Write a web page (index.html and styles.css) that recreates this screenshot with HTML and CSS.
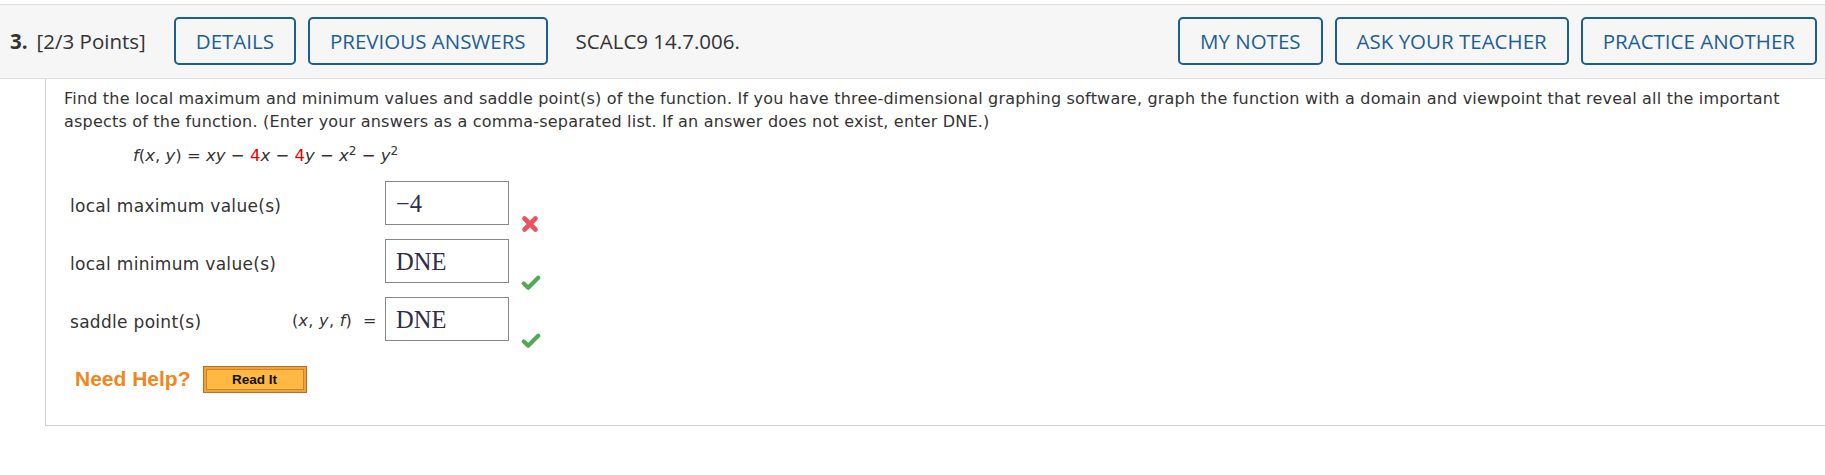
FILE: index.html
```html
<!DOCTYPE html>
<html>
<head>
<meta charset="utf-8">
<link rel="stylesheet" href="styles.css">
</head>
<body>
<div class="qhead">
  <div class="qnum"><b>3.</b><span class="pts">[2/3 Points]</span></div>
  <a class="btn">DETAILS</a>
  <a class="btn">PREVIOUS ANSWERS</a>
  <span class="code">SCALC9 14.7.006.</span>
  <span class="spacer"></span>
  <a class="btn">MY NOTES</a>
  <a class="btn">ASK YOUR TEACHER</a>
  <a class="btn">PRACTICE ANOTHER</a>
</div>
<div class="qbody">
  <p class="prompt">Find the local maximum and minimum values and saddle point(s) of the function. If you have three-dimensional graphing software, graph the function with a domain and viewpoint that reveal all the important aspects of the function. (Enter your answers as a comma-separated list. If an answer does not exist, enter DNE.)</p>
  <p class="func"><i>f</i>(<i>x</i>, <i>y</i>) = <i>xy</i> − <span class="red">4</span><i>x</i> − <span class="red">4</span><i>y</i> − <i>x</i><sup>2</sup> − <i>y</i><sup>2</sup></p>
  <div class="rows">
    <div class="row">
      <span class="label">local maximum value(s)</span>
      <span class="eq"></span>
      <span class="ans">−4</span>
      <svg class="mark" width="18" height="18" viewBox="0 0 18 18"><path d="M3.5 3.5 L14.5 14.5 M14.5 3.5 L3.5 14.5" stroke="#e8545c" stroke-width="4.6" stroke-linecap="round"/></svg>
    </div>
    <div class="row">
      <span class="label">local minimum value(s)</span>
      <span class="eq"></span>
      <span class="ans">DNE</span>
      <svg class="mark" width="20" height="16" viewBox="0 0 20 16"><path d="M2.8 8.5 L7.2 12.8 L17.2 2.8" fill="none" stroke="#55a855" stroke-width="4.2" stroke-linecap="round" stroke-linejoin="round"/></svg>
    </div>
    <div class="row">
      <span class="label">saddle point(s)</span>
      <span class="eq">(<i>x</i>, <i>y</i>, <i>f</i>) &nbsp;=</span>
      <span class="ans">DNE</span>
      <svg class="mark" width="20" height="16" viewBox="0 0 20 16"><path d="M2.8 8.5 L7.2 12.8 L17.2 2.8" fill="none" stroke="#55a855" stroke-width="4.2" stroke-linecap="round" stroke-linejoin="round"/></svg>
    </div>
  </div>
  <div class="help">
    <span class="need">Need Help?</span>
    <span class="readit"><span class="readit-in">Read It</span></span>
  </div>
</div>
</body>
</html>
```
FILE: styles.css
```css
html, body {
  margin: 0;
  padding: 0;
  background: #fff;
}
body {
  font-family: "DejaVu Sans", Verdana, sans-serif;
  color: #333;
}
.qhead {
  margin-top: 4px;
  border-top: 1px solid #dedede;
  border-bottom: 1px solid #dedede;
  background: #f6f6f6;
  display: flex;
  align-items: center;
  gap: 12px;
  padding: 12px 8px 13px 10px;
  font-family: "Open Sans", sans-serif;
  font-size: 20.5px;
  color: #333;
}
.qnum {
  display: flex;
  gap: 9px;
  margin-right: 16px;
}
.qnum b { font-weight: 700; }
.btn {
  display: flex;
  align-items: center;
  justify-content: center;
  box-sizing: border-box;
  height: 48px;
  padding: 0 20px;
  border: 2px solid #1b5e93;
  border-radius: 5px;
  color: #1d5f94;
}
.code {
  margin-left: 16px;
}
.spacer { flex: 1; }
.qbody {
  margin-left: 45px;
  border-left: 1px solid #cfcfcf;
  border-bottom: 1px solid #cfcfcf;
  height: 347px;
  box-sizing: border-box;
  padding: 8px 0 0 18px;
  font-size: 16px;
}
.prompt {
  margin: 0;
  line-height: 23px;
  max-width: 1745px;
  letter-spacing: 0.2px;
}
.func {
  margin: 12px 0 0 69px;
  line-height: 22px;
  font-size: 16.5px;
}
.func sup {
  font-size: 12px;
  vertical-align: 6px;
  line-height: 0;
}
.red { color: #e00; }
.rows {
  margin-top: 14px;
  display: flex;
  flex-direction: column;
  gap: 14px;
  padding-left: 6px;
}
.row {
  display: flex;
  align-items: center;
  height: 44px;
}
.label {
  width: 222px;
  font-size: 17px;
  letter-spacing: 0.3px;
  padding-top: 6px;
}
.eq {
  width: 93px;
  font-size: 16px;
  letter-spacing: 0.3px;
  padding-top: 2px;
}
.ans {
  box-sizing: border-box;
  width: 124px;
  height: 44px;
  border: 1px solid #888;
  padding: 8px 0 0 10px;
  font-family: "Liberation Serif", "Times New Roman", serif;
  font-size: 24.5px;
  color: #2d2d4a;
  background: #fff;
}
.mark {
  align-self: flex-end;
  margin: 0 0 -8px 12px;
}
.help {
  margin-top: 25px;
  display: flex;
  align-items: center;
  gap: 12px;
  padding-left: 11px;
}
.need {
  font-family: "Liberation Sans", Arial, sans-serif;
  font-weight: bold;
  font-size: 21px;
  color: #f0861c;
  margin-top: -2px;
}
.readit {
  display: flex;
  box-sizing: border-box;
  width: 104px;
  height: 27px;
  border: 1px solid #b8701e;
  background: #f0a23a;
  padding: 2px;
}
.readit-in {
  flex: 1;
  display: flex;
  align-items: center;
  justify-content: center;
  border: 1px solid #c9842e;
  background: #ffb842;
  font-family: "Liberation Sans", Arial, sans-serif;
  font-weight: bold;
  font-size: 13.5px;
  color: #111;
}
```
